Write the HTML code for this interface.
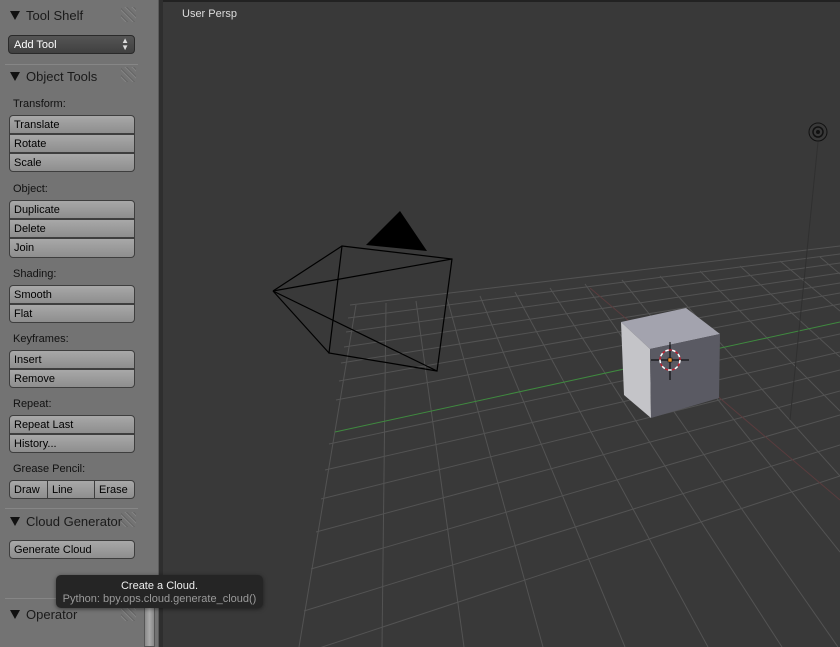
<!DOCTYPE html>
<html><head><meta charset="utf-8"><style>
*{margin:0;padding:0;box-sizing:border-box}
body{width:840px;height:647px;overflow:hidden;background:#393939;font-family:"Liberation Sans",sans-serif;position:relative}
#side{position:absolute;left:0;top:0;width:159px;height:647px;background:#737373;border-right:1px solid #5a5a5a}
#edge{position:absolute;left:159px;top:0;width:4px;height:647px;background:#2e2e2e}
.hd{position:absolute;left:10px;font-size:13px;color:#1a1a1a}
.hd:before{content:"";display:inline-block;width:0;height:0;border-left:5px solid transparent;border-right:5px solid transparent;border-top:9px solid #111;margin-right:6px;vertical-align:0px}
.hatch{position:absolute;left:121px;width:15px;height:15px;background:repeating-linear-gradient(45deg,transparent 0 3px,#828282 3px 4px,#666 4px 5px)}
.lb{position:absolute;left:13px;font-size:11px;color:#111}
.bt{position:absolute;left:9px;width:126px;height:19px;background:linear-gradient(#a8a8a8,#8e8e8e);border:1px solid #3e3e3e;font-size:11px;color:#000;padding:3px 0 0 4px}
.sep{position:absolute;left:5px;width:133px;height:1px;background:#5c5c5c;border-bottom:1px solid #868686}
</style></head><body>
<div style="position:absolute;left:0;top:0;width:840px;height:2px;background:#222"></div>
<svg width="840" height="647" style="position:absolute;left:0;top:0">
<g stroke="#535353" stroke-width="1" fill="none">
<line x1="350" y1="305" x2="840" y2="246"/><line x1="348" y1="318" x2="840" y2="254"/><line x1="346" y1="332" x2="840" y2="263"/><line x1="344" y1="347" x2="840" y2="273"/><line x1="341" y1="363" x2="840" y2="283"/><line x1="339" y1="381" x2="840" y2="293"/><line x1="336" y1="400" x2="840" y2="304"/><line x1="329" y1="444" x2="840" y2="334"/><line x1="325" y1="470" x2="840" y2="352"/><line x1="321" y1="499" x2="840" y2="370"/><line x1="316" y1="532" x2="840" y2="391"/><line x1="311" y1="569" x2="840" y2="415"/><line x1="304" y1="611" x2="840" y2="445"/><line x1="298" y1="655" x2="840" y2="476"/>
<line x1="356" y1="305" x2="299" y2="647"/><line x1="386" y1="303" x2="382" y2="647"/><line x1="416" y1="301" x2="464" y2="647"/><line x1="447" y1="298" x2="543" y2="647"/><line x1="480" y1="296" x2="625" y2="647"/><line x1="515" y1="292" x2="708" y2="647"/><line x1="550" y1="288" x2="782" y2="647"/><line x1="585" y1="284" x2="838" y2="647"/><line x1="622" y1="280" x2="840" y2="552"/><line x1="660" y1="276" x2="840" y2="476"/><line x1="700" y1="271" x2="840" y2="411"/><line x1="740" y1="266" x2="840" y2="357"/><line x1="780" y1="261" x2="840" y2="311"/><line x1="820" y1="257" x2="840" y2="274"/>
</g>
<line x1="590" y1="288" x2="840" y2="500" stroke="#5a3c3e" stroke-width="1"/>
<line x1="335" y1="432" x2="840" y2="322" stroke="#3f8a3f" stroke-width="1"/>
<line x1="818" y1="142" x2="790" y2="420" stroke="#303030"/>
<circle cx="818" cy="132" r="9" fill="none" stroke="#111" stroke-width="1"/><circle cx="818" cy="132" r="5" fill="none" stroke="#111" stroke-width="1.5"/><circle cx="818" cy="132" r="2" fill="#111"/>
<g stroke="#000" stroke-width="1.2" fill="none">
<polygon points="342,246 452,259 437,371 329,353"/>
<line x1="273" y1="291" x2="342" y2="246"/><line x1="273" y1="291" x2="452" y2="259"/><line x1="273" y1="291" x2="437" y2="371"/><line x1="273" y1="291" x2="329" y2="353"/>
</g>
<polygon points="366,245 400,211 427,251" fill="#000"/>
<polygon points="621,322 686,308 720,334 650,349" fill="#a3a3ae"/>
<polygon points="621,322 650,349 651,418 624,395" fill="#c4c4c8"/>
<polygon points="650,349 720,334 719,398 651,418" fill="#5a5a63"/>
<line x1="651" y1="360" x2="689" y2="360" stroke="#000"/><line x1="670" y1="342" x2="670" y2="380" stroke="#000"/>
<circle cx="670" cy="360" r="10" fill="none" stroke="#fff" stroke-width="1.5" stroke-dasharray="4 3"/>
<circle cx="670" cy="360" r="10" fill="none" stroke="#c02030" stroke-width="1.5" stroke-dasharray="3 4" stroke-dashoffset="3.5"/>
<rect x="668" y="358" width="4" height="4" fill="#e89030" stroke="#000" stroke-width=".5"/>
</svg>
<div style="position:absolute;left:182px;top:8px;font-size:11px;color:#ddd">User Persp</div>
<div id="side">
<div class="hd" style="top:8px">Tool Shelf</div><div class="hatch" style="top:7px"></div>
<div style="position:absolute;left:8px;top:35px;width:127px;height:19px;border-radius:4px;background:linear-gradient(#555,#404040);border:1px solid #2a2a2a;color:#fff;font-size:11px;padding:3px 0 0 5px">Add Tool<span style="position:absolute;right:5px;top:1px;font-size:8px;line-height:7px;color:#ddd">▲<br>▼</span></div>
<div class="sep" style="top:64px"></div>
<div class="hd" style="top:69px">Object Tools</div><div class="hatch" style="top:67px"></div>
<div class="lb" style="top:98px">Transform:</div>
<div class="bt" style="top:115px;border-radius:4px 4px 0 0">Translate</div><div class="bt" style="top:134px">Rotate</div><div class="bt" style="top:153px;border-radius:0 0 4px 4px">Scale</div>
<div class="lb" style="top:183px">Object:</div>
<div class="bt" style="top:200px;border-radius:4px 4px 0 0">Duplicate</div><div class="bt" style="top:219px">Delete</div><div class="bt" style="top:238px;border-radius:0 0 4px 4px;height:20px">Join</div>
<div class="lb" style="top:268px">Shading:</div>
<div class="bt" style="top:285px;border-radius:4px 4px 0 0">Smooth</div><div class="bt" style="top:304px;border-radius:0 0 4px 4px">Flat</div>
<div class="lb" style="top:333px">Keyframes:</div>
<div class="bt" style="top:350px;border-radius:4px 4px 0 0">Insert</div><div class="bt" style="top:369px;border-radius:0 0 4px 4px">Remove</div>
<div class="lb" style="top:398px">Repeat:</div>
<div class="bt" style="top:415px;border-radius:4px 4px 0 0">Repeat Last</div><div class="bt" style="top:434px;border-radius:0 0 4px 4px">History...</div>
<div class="lb" style="top:463px">Grease Pencil:</div>
<div class="bt" style="top:480px;width:39px;border-radius:4px 0 0 4px">Draw</div><div class="bt" style="top:480px;left:47px;width:48px">Line</div><div class="bt" style="top:480px;left:94px;width:41px;border-radius:0 4px 4px 0">Erase</div>
<div class="sep" style="top:508px"></div>
<div class="hd" style="top:514px">Cloud Generator</div><div class="hatch" style="top:512px"></div>
<div class="bt" style="top:540px;border-radius:4px;height:19px">Generate Cloud</div>
<div class="sep" style="top:598px"></div>
<div class="hd" style="top:607px">Operator</div><div class="hatch" style="top:606px"></div>
<div style="position:absolute;left:144px;top:604px;width:11px;height:43px;background:linear-gradient(90deg,#888,#aaa,#888);border:1px solid #555;border-radius:4px 4px 0 0"></div>
</div>
<div id="edge"></div>
<div style="position:absolute;left:56px;top:575px;width:207px;height:33px;background:#252525;border-radius:5px;box-shadow:0 1px 4px rgba(0,0,0,.5);text-align:center;font-size:11px;padding-top:5px;line-height:13px">
<div style="color:#eee">Create a Cloud.</div><div style="color:#9a9a9a">Python: bpy.ops.cloud.generate_cloud()</div></div>
</body></html>
